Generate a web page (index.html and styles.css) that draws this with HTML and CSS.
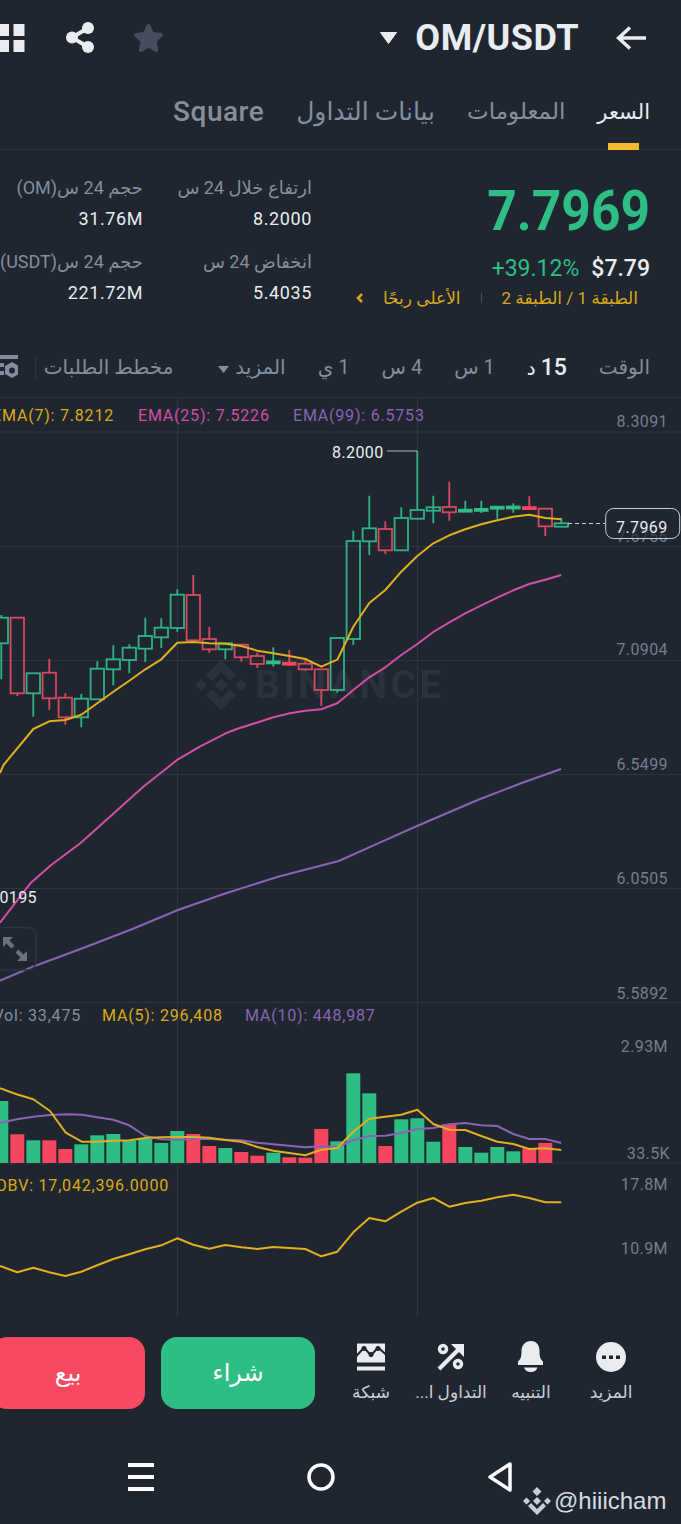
FILE: index.html
```html
<!DOCTYPE html>
<html lang="ar" dir="rtl">
<head>
    <meta charset="UTF-8">
    <meta name="viewport" content="width=device-width, initial-scale=1.0">
    <title>OM/USDT</title>
    <link rel="stylesheet" href="styles.css">
</head>
<body>
<div class="page">
    <header class="topbar">
        <svg class="back" width="30" height="24" viewBox="0 0 30 24"><path d="M30 12H3M14 1.500L2.500 12 14 22.500"/></svg>
        <h1 class="pair"><bdi>OM/USDT</bdi></h1>
        <svg class="caret" width="19" height="14" viewBox="0 0 19 14"><path d="M1.500 1.500h16L9.500 12.500z"/></svg>
        <div class="actions">
            <svg width="31" height="30" viewBox="0 0 31 30"><path class="star" d="M15.500 3l3.600 8 8.900 1-6.600 6 1.800 9-7.700-4.500L7.800 27l1.800-9L3 12l8.900-1z"/></svg>
            <svg width="28" height="31" viewBox="0 0 28 31"><path class="share-line" d="M22 6L6 15.500 22 25"/><circle class="share-dot" cx="22" cy="6" r="6"/><circle class="share-dot" cx="6" cy="15.500" r="6"/><circle class="share-dot" cx="22" cy="25" r="6"/></svg>
            <svg class="grid-icon" width="27" height="28" viewBox="0 0 27 28"><rect class="share-dot" width="11" height="12"/><rect class="share-dot" x="15.500" width="11" height="12"/><rect class="share-dot" y="16" width="11" height="12"/><rect class="share-dot" x="15.500" y="16" width="11" height="12"/></svg>
        </div>
    </header>

    <nav class="tabs">
        <span class="tab active">السعر</span>
        <span class="tab tab-info">المعلومات</span>
        <span class="tab tab-data">بيانات التداول</span>
        <span class="tab latin">Square</span>
    </nav>

    <section class="stats">
        <div class="price-col">
            <div class="last-price"><bdi>7.7969</bdi></div>
            <div class="change-row">
                <span class="fiat"><bdi>$7.79</bdi></span>
                <span class="change"><bdi>+39.12%</bdi></span>
            </div>
            <div class="tier-row">
                <span>الطبقة 1 / الطبقة 2</span>
                <i class="tier-sep"></i>
                <span>الأعلى ربحًا</span>
                <svg width="7" height="10" viewBox="0 0 7 10"><path d="M6 1L2 5l4 4"/></svg>
            </div>
        </div>
        <div class="stat-col">
            <div class="stat-label">ارتفاع خلال 24 س</div>
            <div class="stat-value"><bdi>8.2000</bdi></div>
            <div class="stat-label low">انخفاض 24 س</div>
            <div class="stat-value"><bdi>5.4035</bdi></div>
        </div>
        <div class="stat-col">
            <div class="stat-label">حجم 24 س(OM)</div>
            <div class="stat-value"><bdi>31.76M</bdi></div>
            <div class="stat-label low">حجم 24 س(USDT)</div>
            <div class="stat-value"><bdi>221.72M</bdi></div>
        </div>
    </section>

    <nav class="timebar">
        <span>الوقت</span>
        <span class="on"><b>15</b> د</span>
        <span>1 س</span>
        <span>4 س</span>
        <span>1 ي</span>
        <span class="more">المزيد <svg width="13" height="9" viewBox="0 0 13 9"><path d="M1 1h11L6.500 8z"/></svg></span>
        <span class="depth">مخطط الطلبات</span>
        <i class="bar-sep"></i>
        <svg class="book" width="22" height="24" viewBox="0 0 22 24"><path d="M0 0h22v4H0zM0 8h8v4H0zM0 16h8v4H0z"/><path fill-rule="evenodd" d="M16 7l7 4v8l-7 4-7-4v-8zm0 5.500a3 3 0 100 6 3 3 0 000-6z"/></svg>
    </nav>

    <svg class="chart" width="681" height="920" viewBox="0 397 681 920" dir="ltr">
        <!-- grid -->
        <path class="grid" d="M0 397.500H681M0 432H681M0 546.500H681M0 660.500H681M0 774.500H681M0 888.500H681M0 1002.500H681M0 1163H681M177.500 397V1317M417.500 397V1317"/>

        <!-- watermark -->
        <path class="mark" d="M221 660l15 15-6 6-9-9-9 9-6-6zM221 710l-15-15 6-6 9 9 9-9 6 6zM201 679l6 6-6 6-6-6zM241 679l6 6-6 6-6-6zM221 678l7 7-7 7-7-7z"/>
        <text class="mark-text" x="255" y="698">BINANCE</text>

        <!-- axis -->
        <text class="axis" x="668" y="427">8.3091</text>
        <text class="axis" x="668" y="542">7.6756</text>
        <text class="axis" x="668" y="655">7.0904</text>
        <text class="axis" x="668" y="770">6.5499</text>
        <text class="axis" x="668" y="884">6.0505</text>
        <text class="axis" x="668" y="999">5.5892</text>
        <text class="axis" x="668" y="1052">2.93M</text>
        <text class="axis" x="670" y="1159">33.5K</text>
        <text class="axis" x="668" y="1190">17.8M</text>
        <text class="axis" x="668" y="1254">10.9M</text>

        <!-- legends -->
        <text class="legend yellow" x="114" y="421" text-anchor="end">EMA(7): 7.8212</text>
        <text class="legend pink" x="138" y="421">EMA(25): 7.5226</text>
        <text class="legend purple" x="293" y="421">EMA(99): 6.5753</text>
        <text class="legend grey" x="81" y="1021" text-anchor="end">Vol: 33,475</text>
        <text class="legend yellow" x="102" y="1021">MA(5): 296,408</text>
        <text class="legend purple" x="245" y="1021">MA(10): 448,987</text>
        <text class="legend yellow" x="169" y="1191" text-anchor="end">OBV: 17,042,396.0000</text>

        <!-- wicks -->
        <path class="up-line" d="M1.300 615V617.700M1.300 643.300V679.300M33.300 693.300V716.700M81.300 694V698.700M81.300 717.300V727.300M97.300 661.300V668.700M113.300 645.300V659.300M113.300 669.300V685.300M129.300 644.300V647.700M129.300 660V673.300M145.300 617.700V636M145.300 648.700V662M161.300 618.300V627.700M161.300 637.300V648M177.300 589.300V594.700M177.300 628V631.700M225.300 649.300V659.300M273.300 647.300V666.700M337.300 690V692.700M353.300 530.700V541M353.300 639V645M369.300 495.700V528.300M369.300 541.300V555M401.300 507.300V518M417.300 450.700V510M433.300 495.700V523.300M465.300 500.700V509M481.300 500.700V513M497.300 509V518.700M513.300 503.300V512.700M561.300 518V523.300"/>
        <path class="dn-line" d="M17.300 693.300V696M49.300 658.700V672.700M49.300 698.300V710M65.300 693.300V697.700M65.300 717.300V724.700M193.300 575V595M209.300 626.700V639M209.300 649.300V652.700M241.300 657.300V661.700M257.300 652.700V656M257.300 664V668M289.300 650V666M305.300 660.700V663.700M305.300 669.300V670.700M321.300 690V706M385.300 521.300V529M385.300 550.300V554M449.300 481.700V507M449.300 512.300V520.700M529.300 496.300V506.300M545.300 526.300V536"/>

        <!-- candle bodies -->
        <g class="up-line">
            <rect x="-5.400" y="617.700" width="13.400" height="25.600"/>
            <rect x="26.600" y="673.300" width="13.400" height="20"/>
            <rect x="74.600" y="698.700" width="13.400" height="18.600"/>
            <rect x="90.600" y="668.700" width="13.400" height="30.600"/>
            <rect x="106.600" y="659.300" width="13.400" height="10"/>
            <rect x="122.600" y="647.700" width="13.400" height="12.300"/>
            <rect x="138.600" y="636" width="13.400" height="12.700"/>
            <rect x="154.600" y="627.700" width="13.400" height="9.600"/>
            <rect x="170.600" y="594.700" width="13.400" height="33.300"/>
            <rect x="218.600" y="643.300" width="13.400" height="6"/>
            <rect x="330.600" y="638" width="13.400" height="52"/>
            <rect x="346.600" y="541" width="13.400" height="98"/>
            <rect x="362.600" y="528.300" width="13.400" height="13"/>
            <rect x="394.600" y="518" width="13.400" height="32.300"/>
            <rect x="410.600" y="510" width="13.400" height="8.700"/>
            <rect x="426.600" y="507.300" width="13.400" height="3.400"/>
            <rect x="554.600" y="523.300" width="13.400" height="3.400"/>
        </g>
        <g class="dn-line">
            <rect x="10.600" y="617.700" width="13.400" height="75.600"/>
            <rect x="42.600" y="672.700" width="13.400" height="25.600"/>
            <rect x="58.600" y="697.700" width="13.400" height="19.600"/>
            <rect x="186.600" y="595" width="13.400" height="45.300"/>
            <rect x="202.600" y="639" width="13.400" height="10.300"/>
            <rect x="234.600" y="644.700" width="13.400" height="12.600"/>
            <rect x="250.600" y="656" width="13.400" height="8"/>
            <rect x="298.600" y="663.700" width="13.400" height="5.600"/>
            <rect x="314.600" y="669.300" width="13.400" height="20.700"/>
            <rect x="378.600" y="529" width="13.400" height="21.300"/>
            <rect x="442.600" y="507" width="13.400" height="5.300"/>
            <rect x="538.600" y="508.700" width="13.400" height="17.600"/>
        </g>
        <g class="up-fill">
            <rect x="266" y="660.500" width="14.600" height="3.800"/>
            <rect x="458" y="508.800" width="14.600" height="3.800"/>
            <rect x="474" y="508" width="14.600" height="3.800"/>
            <rect x="490" y="505.800" width="14.600" height="3.800"/>
            <rect x="506" y="505.600" width="14.600" height="3.800"/>
        </g>
        <g class="dn-fill">
            <rect x="282" y="661.800" width="14.600" height="3.800"/>
            <rect x="522" y="506.200" width="14.600" height="3.800"/>
        </g>

        <!-- moving averages -->
        <polyline class="line ema7" points="0,773 3.500,765 33.300,729 49.300,721.300 65.300,720 81.300,714.700 97.300,703.300 113.300,691.700 129.300,680.700 145.300,669.300 161.300,659.300 177.300,642.700 193.300,642 209.300,643.300 225.300,643.700 241.300,646 257.300,650.700 273.300,653.300 289.300,656 305.300,659 321.300,666.700 337.300,659.700 353.300,626.700 369.300,603 385.300,590 401.300,571.700 417.300,556 433.300,543.300 449.300,535.300 465.300,529.300 481.300,524.300 497.300,520.300 513.300,516.700 529.300,514.700 545.300,518 561.300,519.300"/>
        <polyline class="line ema25" points="0,922.700 30.400,883.300 51.200,865 80.300,843.300 113.800,813.300 143.300,786.700 178,759.300 199.800,746.700 225.800,733.300 236.700,729 256.700,722.700 273.300,717.300 290,713.300 305.300,710.700 321.300,709.300 337.300,703.300 353.300,690 369.300,677.300 385.300,667.300 401.300,655 417.300,644 433.300,632 449.300,622.300 465.300,613.300 481.300,605.300 497.300,597.700 513.300,590.300 529.300,584 545.300,579.700 561.300,575"/>
        <polyline class="line ema99" points="0,980.700 34.700,966 82.500,948.300 130,930 178,910 225.800,893.300 278,876.700 338.700,861 382,841.700 417,826 477.700,800 521,783.300 561,769"/>

        <!-- high / low marks -->
        <path class="high-line" d="M387 451H417"/>
        <text class="mark-label" x="332" y="458">8.2000</text>
        <text class="mark-label" x="37" y="903" text-anchor="end">6.0195</text>

        <!-- last price -->
        <path class="last-line" d="M568 523.500H605"/>
        <rect class="last-box" x="605.700" y="508.500" width="74" height="30" rx="8"/>
        <text class="last-text" x="616" y="533">7.7969</text>

        <!-- expand -->
        <rect class="expand" x="-12" y="927.500" width="48" height="42.500" rx="8"/>
        <path class="expand-arrows" d="M3 937h10l-3.500 3.500 5 5-3 3-5-5L3 947zM27 961H17l3.500-3.500-5-5 3-3 5 5L27 951z"/>

        <!-- volume -->
        <g class="vol-up">
            <rect x="-5.700" y="1101" width="14" height="62"/>
            <rect x="26.300" y="1140.300" width="14" height="22.700"/>
            <rect x="74.300" y="1144.300" width="14" height="18.700"/>
            <rect x="90.300" y="1135.300" width="14" height="27.700"/>
            <rect x="106.300" y="1134" width="14" height="29"/>
            <rect x="122.300" y="1140.300" width="14" height="22.700"/>
            <rect x="138.300" y="1139" width="14" height="24"/>
            <rect x="154.300" y="1143" width="14" height="20"/>
            <rect x="170.300" y="1131" width="14" height="32"/>
            <rect x="218.300" y="1148" width="14" height="15"/>
            <rect x="266.300" y="1152.700" width="14" height="10.300"/>
            <rect x="330.300" y="1141.300" width="14" height="21.700"/>
            <rect x="346.300" y="1073.300" width="14" height="89.700"/>
            <rect x="362.300" y="1093.300" width="14" height="69.700"/>
            <rect x="394.300" y="1119.300" width="14" height="43.700"/>
            <rect x="410.300" y="1118.300" width="14" height="44.700"/>
            <rect x="426.300" y="1141.700" width="14" height="21.300"/>
            <rect x="458.300" y="1147" width="14" height="16"/>
            <rect x="474.300" y="1152.700" width="14" height="10.300"/>
            <rect x="490.300" y="1147" width="14" height="16"/>
            <rect x="506.300" y="1151.300" width="14" height="11.700"/>
        </g>
        <g class="vol-dn">
            <rect x="10.300" y="1134.300" width="14" height="28.700"/>
            <rect x="42.300" y="1140.300" width="14" height="22.700"/>
            <rect x="58.300" y="1149" width="14" height="14"/>
            <rect x="186.300" y="1134" width="14" height="29"/>
            <rect x="202.300" y="1146" width="14" height="17"/>
            <rect x="234.300" y="1152" width="14" height="11"/>
            <rect x="250.300" y="1155.700" width="14" height="7.300"/>
            <rect x="282.300" y="1157.300" width="14" height="5.700"/>
            <rect x="298.300" y="1157.700" width="14" height="5.300"/>
            <rect x="314.300" y="1129" width="14" height="34"/>
            <rect x="378.300" y="1146" width="14" height="17"/>
            <rect x="442.300" y="1124.300" width="14" height="38.700"/>
            <rect x="522.300" y="1148.300" width="14" height="14.700"/>
            <rect x="538.300" y="1143" width="14" height="20"/>
        </g>
        <polyline class="line ema99" points="0,1122.700 16.700,1119.300 33.300,1116.700 50,1115 66.700,1114.300 81.700,1114.700 97.300,1117.300 113.300,1119.700 129.300,1125.300 145.300,1136 161.300,1139.300 177.300,1140 193.300,1139 209.300,1139 225.300,1139.700 241.300,1140.300 257.300,1142.700 273.300,1144.300 289.300,1145.700 305.300,1147.300 321.300,1146.300 337.300,1146.700 353.300,1140.300 369.300,1136 385.300,1135.700 401.300,1133 417.300,1129 433.300,1128 449.300,1124.300 465.300,1123 481.300,1125.300 497.300,1126 513.300,1134 529.300,1139 545.300,1139 561.300,1143"/>
        <polyline class="line ema7" points="0,1088.300 16.700,1094.300 33.300,1099.300 50,1111 65.700,1132.700 81.700,1141.700 97.300,1141.700 113.300,1140.700 129.300,1140.300 145.300,1138 161.300,1137.300 177.300,1137 193.300,1137 209.300,1137.700 225.300,1140 241.300,1141.700 257.300,1147 273.300,1150.700 289.300,1153 305.300,1155.300 321.300,1149.700 337.300,1148 353.300,1131.700 369.300,1118.700 385.300,1116.700 401.300,1114.700 417.300,1109.700 433.300,1124 449.300,1129.700 465.300,1130 481.300,1136 497.300,1141.700 513.300,1144 529.300,1149 545.300,1148.300 561.300,1150"/>

        <!-- obv -->
        <polyline class="line ema7" points="0,1266 17.300,1272.300 33.300,1267.700 49.300,1272.300 65.300,1276 81.300,1271.700 97.300,1265.300 113.300,1259 129.300,1254.300 145.300,1249.300 161.300,1245.300 177.300,1238.300 193.300,1244.700 209.300,1248.700 225.300,1245 241.300,1247.300 257.300,1249 273.300,1247 289.300,1248 305.300,1249 321.300,1256.300 337.300,1251.700 353.300,1232.300 369.300,1218 385.300,1221.300 401.300,1211.700 417.300,1202.700 433.300,1198 449.300,1206.700 465.300,1203 481.300,1200.700 497.300,1197.300 513.300,1194.700 529.300,1198 545.300,1202.300 561.300,1202.300"/>
    </svg>

    <section class="trade">
        <div class="tool">
            <svg width="30" height="30" viewBox="0 0 30 30"><circle class="tool-fill" cx="15" cy="15" r="15"/><path class="tool-cut" d="M6 13.500h4v3.500H6zM13 13.500h4v3.500h-4zM20 13.500h4v3.500h-4z"/></svg>
            <span>المزيد</span>
        </div>
        <div class="tool">
            <svg width="30" height="32" viewBox="0 0 30 32"><path class="tool-fill" d="M15 0c6 0 8.500 4.500 8.500 10 0 5 .5 8 3.500 10.500V24H2v-3.500C5 18 5.500 15 5.500 10 5.500 4.500 9 0 15 0z"/><path class="tool-fill" d="M8 26.500h13.500c-1 3-3.500 4.500-6.700 4.500S9 29.500 8 26.500z"/></svg>
            <span>التنبيه</span>
        </div>
        <div class="tool">
            <svg width="28" height="28" viewBox="0 0 28 28"><path class="tool-stroke" d="M2 26L25 3"/><path class="tool-fill" d="M14 1h13v13z"/><circle class="tool-ring" cx="6" cy="6" r="3.500"/><circle class="tool-ring" cx="21" cy="21" r="3.500"/></svg>
            <span>التداول ا...</span>
        </div>
        <div class="tool">
            <svg width="28" height="27" viewBox="0 0 28 27"><path class="tool-fill" d="M0 0h28v19H0z"/><path class="zigzag" d="M-1 13L7 4l7 8 7-8 8 7"/><path class="tool-fill" d="M0 23h28v4H0z"/><circle class="tool-cut" cx="7" cy="5" r="2.500"/><circle class="tool-cut" cx="14" cy="11" r="2.500"/><circle class="tool-cut" cx="21" cy="5" r="2.500"/></svg>
            <span>شبكة</span>
        </div>
        <button class="btn buy">شراء</button>
        <button class="btn sell">بيع</button>
    </section>

    <footer class="sysnav" dir="ltr">
        <svg width="30" height="34" viewBox="0 0 30 34"><path d="M2 3h26v4H2zM2 15h26v4H2zM2 27h26v4H2z"/></svg>
        <svg width="30" height="34" viewBox="0 0 30 34"><circle class="nav-ring" cx="15" cy="17" r="12"/></svg>
        <svg width="30" height="34" viewBox="0 0 30 34"><path class="nav-tri" d="M24 4L4 17l20 13z"/></svg>
    </footer>

    <div class="wm" dir="ltr">
        <svg width="28" height="28" viewBox="0 0 28 28"><path d="M14 0l4.500 4.500L14 9 9.500 4.500zM3.500 10.500L7 14l-3.500 3.500L0 14zM24.500 10.500L28 14l-3.500 3.500L21 14zM14 10l4 4-4 4-4-4zM14 28l-9-9 3-3 6 6 6-6 3 3z"/></svg>
        <span>@hiiicham</span>
    </div>
</div>
</body>
</html>
```

FILE: styles.css
```css
* {
    box-sizing: border-box;
}
body {
    margin: 0;
    background-color: #1f2630;
    font-family: Roboto, "DejaVu Sans", sans-serif;
    color: #eaecef;
}
.page {
    position: relative;
    width: 681px;
    height: 1524px;
    overflow: hidden;
    background-color: #1f2630;
}

/* top bar */
.topbar {
    display: flex;
    align-items: center;
    height: 75px;
    padding-right: 35px;
}
.back path {
    fill: none;
    stroke: #eaecef;
    stroke-width: 3.500;
}
.pair {
    margin: 0 37px 0 17px;
    font-size: 36px;
    font-weight: 700;
    line-height: 1;
    letter-spacing: .5px;
}
.caret path {
    fill: #eaecef;
    stroke: #eaecef;
    stroke-linejoin: round;
}
.actions {
    display: flex;
    align-items: center;
    gap: 39px;
    margin-right: auto;
    margin-left: -2px;
}
.grid-icon {
    margin-right: 2px;
}
.star {
    fill: #474d5c;
    stroke: #474d5c;
    stroke-width: 4;
    stroke-linejoin: round;
}
.share-line {
    fill: none;
    stroke: #eaecef;
    stroke-width: 4;
}
.share-dot {
    fill: #eaecef;
}

/* tabs */
.tabs {
    display: flex;
    align-items: center;
    gap: 32px;
    height: 75px;
    padding: 0 31px 0 0;
    border-bottom: 1px solid #2e3541;
    font-size: 24px;
    line-height: 30px;
    color: #848e9c;
}
.tab {
    position: relative;
}
.tab-info {
    font-size: 23px;
}
.tab-data {
    font-size: 25px;
}
.tab.active {
    font-size: 21px;
    color: #eaecef;
}
.tab.active::after {
    content: "";
    position: absolute;
    left: 11px;
    right: 11px;
    top: 46px;
    height: 7px;
    background-color: #f3ba2f;
}
.tab.latin {
    font-size: 28px;
    font-weight: 500;
    letter-spacing: .5px;
}

/* price and stats */
.stats {
    display: flex;
    height: 194px;
    padding-right: 31px;
}
.price-col {
    flex: none;
    width: 338px;
    padding-top: 25px;
}
.last-price {
    font-size: 56px;
    font-weight: 700;
    line-height: 72px;
    color: #2ebd85;
    transform: scaleX(.92);
    transform-origin: right center;
}
.change-row {
    display: flex;
    gap: 12px;
    margin-top: 7px;
    font-size: 23px;
    line-height: 30px;
}
.change {
    color: #2ebd85;
}
.fiat {
    font-weight: 500;
}
.tier-row {
    display: flex;
    align-items: center;
    gap: 20px;
    margin-top: 1px;
    padding-right: 12px;
    font-size: 17px;
    line-height: 26px;
    color: #d9a916;
}
.tier-row svg path {
    fill: none;
    stroke: #d9a916;
    stroke-width: 2.500;
}
.tier-sep {
    width: 1px;
    height: 10px;
    background-color: #474d5c;
}
.stat-col {
    flex: none;
    width: 169px;
    padding-top: 23px;
    white-space: nowrap;
}
.stat-label {
    font-size: 18px;
    line-height: 30px;
    color: #848e9c;
}
.stat-label.low {
    margin-top: 14px;
}
.stat-value {
    margin-top: 1px;
    font-size: 18px;
    line-height: 29px;
    letter-spacing: .6px;
}

/* interval bar */
.timebar {
    display: flex;
    align-items: center;
    gap: 32px;
    height: 53px;
    padding: 0 31px 7px 0;
    font-size: 20px;
    color: #848e9c;
    white-space: nowrap;
}
.timebar .on {
    color: #eaecef;
    font-weight: 500;
}
.timebar .on b {
    font-size: 23px;
    font-weight: 500;
}
.more svg path {
    fill: #848e9c;
}
.depth {
    margin-right: 12px;
}
.bar-sep {
    flex: none;
    width: 1px;
    height: 24px;
    margin: 0 -24px;
    background-color: #2e3541;
}
.book {
    flex: none;
    margin-right: 9px;
}
.book path {
    fill: #848e9c;
}

/* chart */
.chart {
    display: block;
    direction: ltr;
}
.chart text {
    font-family: Roboto, sans-serif;
}
.grid {
    fill: none;
    stroke: #2e3541;
    stroke-width: 1;
}
.mark {
    fill: #2b323d;
}
.mark-text {
    fill: #2b323d;
    font-size: 39px;
    font-weight: 700;
    letter-spacing: 3.500px;
}
.axis {
    fill: #767e8c;
    font-size: 16px;
    letter-spacing: .4px;
    text-anchor: end;
}
.legend {
    font-size: 16px;
    letter-spacing: .8px;
}
.yellow {
    fill: #dcab14;
}
.pink {
    fill: #d34ea5;
}
.purple {
    fill: #8a63b5;
}
.grey {
    fill: #848e9c;
}
.up-line {
    fill: none;
    stroke: #2fb386;
    stroke-width: 1.800;
}
.dn-line {
    fill: none;
    stroke: #d9485f;
    stroke-width: 1.800;
}
.up-fill, .vol-up {
    fill: #2ebd85;
}
.dn-fill, .vol-dn {
    fill: #f6465d;
}
.line {
    fill: none;
    stroke-width: 2;
    stroke-linejoin: round;
}
.ema7 {
    stroke: #e0b020;
}
.ema25 {
    stroke: #d34ea5;
}
.ema99 {
    stroke: #8a63b5;
}
.high-line {
    fill: none;
    stroke: #aeb4bc;
    stroke-width: 1;
}
.mark-label {
    fill: #eaecef;
    font-size: 16px;
    letter-spacing: .4px;
}
.last-line {
    fill: none;
    stroke: #c9ced4;
    stroke-width: 1;
    stroke-dasharray: 4 3;
}
.last-box {
    fill: #1f2630;
    fill-opacity: .7;
    stroke: #c9ced4;
    stroke-width: 1;
}
.last-text {
    fill: #eaecef;
    font-size: 16px;
    letter-spacing: .4px;
}
.expand {
    fill: none;
    stroke: #2e3541;
    stroke-width: 1.500;
}
.expand-arrows {
    fill: #6b7280;
}

/* trade row */
.trade {
    display: flex;
    align-items: flex-start;
    height: 113px;
    padding: 20px 30px 0 0;
}
.tool {
    display: flex;
    flex-direction: column;
    align-items: center;
    flex: none;
    width: 80px;
    height: 72px;
    padding-top: 4px;
    font-size: 17px;
    color: #c9ced4;
    white-space: nowrap;
}
.tool svg {
    flex: none;
    height: 32px;
}
.tool span {
    margin-top: 9px;
}
.tool-fill {
    fill: #eaecef;
}
.tool-cut {
    fill: #1f2630;
}
.zigzag {
    fill: none;
    stroke: #1f2630;
    stroke-width: 2;
}
.tool-stroke {
    fill: none;
    stroke: #eaecef;
    stroke-width: 4;
}
.tool-ring {
    fill: #1f2630;
    stroke: #eaecef;
    stroke-width: 3.500;
}
.btn {
    flex: none;
    width: 154px;
    height: 72px;
    border: none;
    border-radius: 16px;
    font-family: Roboto, "DejaVu Sans", sans-serif;
    font-size: 24px;
    color: #fff;
}
.buy {
    margin-right: 16px;
    background-color: #2ebd85;
}
.sell {
    margin-right: 16px;
    background-color: #f84960;
}

/* system nav */
.sysnav {
    display: flex;
    gap: 150px;
    padding: 30px 0 0 126px;
}
.sysnav path {
    fill: #fff;
}
.sysnav .nav-ring, .sysnav .nav-tri {
    fill: none;
    stroke: #fff;
    stroke-width: 3.500;
    stroke-linejoin: round;
}

/* watermark over the nav */
.wm {
    position: absolute;
    left: 523px;
    top: 1487px;
    display: flex;
    align-items: center;
    gap: 3px;
    font-family: "Liberation Sans", sans-serif;
    font-size: 24px;
    color: #d8dce0;
}
.wm svg path {
    fill: #c9ced4;
}
```
